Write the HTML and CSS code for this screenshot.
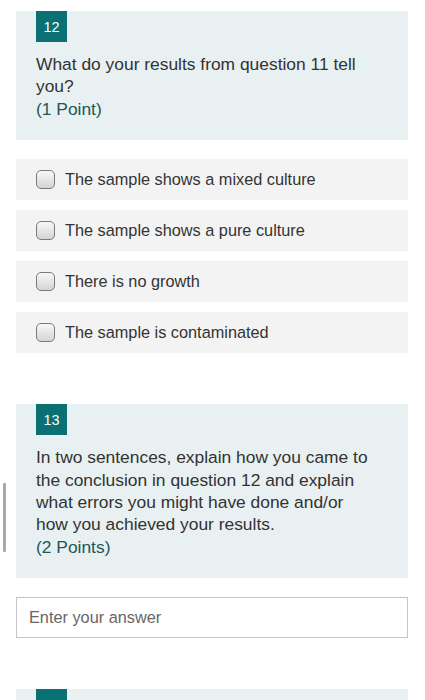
FILE: index.html
```html
<!DOCTYPE html>
<html>
<head>
<meta charset="utf-8">
<link rel="stylesheet" href="styles.css">
</head>
<body>
<div class="scrollbar"></div>
<main class="form">
  <section class="question">
    <div class="q-head">
      <span class="badge">12</span>
      <div class="q-title">What do your results from question 11 tell you?<br><span class="points">(1 Point)</span></div>
    </div>
    <div class="options">
      <label class="option"><span class="check"></span><span>The sample shows a mixed culture</span></label>
      <label class="option"><span class="check"></span><span>The sample shows a pure culture</span></label>
      <label class="option"><span class="check"></span><span>There is no growth</span></label>
      <label class="option"><span class="check"></span><span>The sample is contaminated</span></label>
    </div>
  </section>
  <section class="question">
    <div class="q-head">
      <span class="badge">13</span>
      <div class="q-title">In two sentences, explain how you came to the conclusion in question 12 and explain what errors you might have done and/or how you achieved your results.<br><span class="points">(2 Points)</span></div>
    </div>
    <div class="answer">Enter your answer</div>
  </section>
  <section class="question">
    <div class="q-head">
      <span class="badge">14</span>
    </div>
  </section>
</main>
</body>
</html>
```
FILE: styles.css
```css
html, body {
  margin: 0;
  padding: 0;
  background: #ffffff;
}
body {
  font-family: "Liberation Sans", Arial, sans-serif;
  font-size: 16.3px;
  color: #333333;
  overflow: hidden;
  height: 700px;
  position: relative;
}
.scrollbar {
  position: absolute;
  left: 3px;
  top: 483px;
  width: 3px;
  height: 69px;
  background: #a9a9a9;
  border-radius: 1px;
}
.form {
  padding: 11px 17px 0 16px;
  display: flex;
  flex-direction: column;
  gap: 51px;
}
.question {
  display: flex;
  flex-direction: column;
  gap: 19px;
}
.q-head {
  background: #e8f0f2;
  padding: 0 20px 20px 20px;
  display: flex;
  flex-direction: column;
  gap: 11px;
}
.badge {
  display: flex;
  align-items: center;
  justify-content: center;
  width: 31px;
  height: 31px;
  background: #0b7073;
  color: #ffffff;
  font-size: 14.5px;
}
.q-title {
  font-size: 17.4px;
  line-height: 22.4px;
  padding-right: 16px;
}
.points {
  color: #1d5758;
}
.options {
  display: flex;
  flex-direction: column;
  gap: 10px;
}
.option {
  background: #f3f3f3;
  height: 41px;
  display: flex;
  align-items: center;
  padding-left: 20px;
  gap: 10px;
}
.check {
  width: 17px;
  height: 17px;
  border: 1px solid #7a7a7a;
  border-radius: 5px;
  background: linear-gradient(#f8f8f8, #d4d4d4);
  box-sizing: content-box;
  flex: none;
}
.answer {
  height: 39px;
  border: 1px solid #c4c4c4;
  display: flex;
  align-items: center;
  padding-left: 12px;
  color: #666666;
}
```
